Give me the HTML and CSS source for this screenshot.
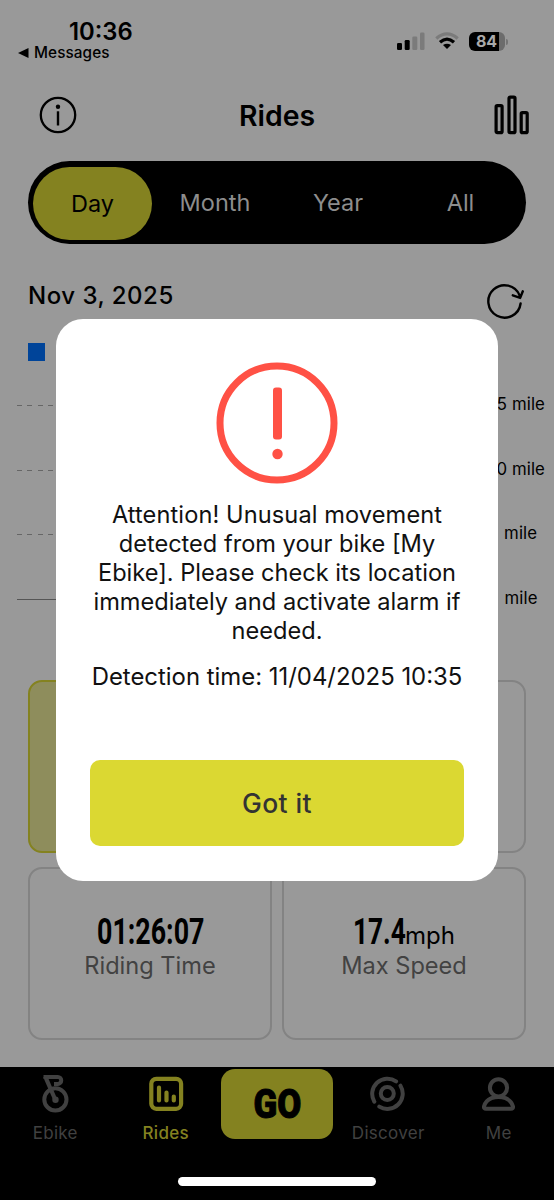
FILE: index.html
```html
<!DOCTYPE html>
<html lang="en">
<head>
<meta charset="utf-8">
<title>Rides</title>
<link rel="stylesheet" href="styles.css">
</head>
<body>
<div class="phone">
  <header class="status">
    <div class="status-left">
      <div class="clock">10:36</div>
      <div class="back"><svg width="11" height="10" viewBox="0 0 11 10"><path d="M0 5 10.500 0V10Z"/></svg><span>Messages</span></div>
    </div>
    <div class="status-right">
      <svg width="28" height="19" viewBox="0 0 28 19">
        <rect x="0" y="11" width="5" height="7" rx="1.300"/><rect x="7.700" y="8" width="5" height="10" rx="1.300"/>
        <rect class="faint" x="15.300" y="4.500" width="5" height="13.500" rx="1.300"/><rect class="faint" x="23" y="0.500" width="4.500" height="17.500" rx="1.300"/>
      </svg>
      <svg class="wifi" width="24" height="18" viewBox="0 0 24 18" fill="none" stroke-width="3.300">
        <path stroke="#7b7b7b" d="M1.300 6.500Q12-2.700 22.700 6.500"/>
        <path stroke="#000" d="M5 10.200Q12 4 19 10.200"/>
        <path fill="#000" d="M8 13Q12 10.600 16 13L12 17Z"/>
      </svg>
      <div class="battery"><span class="battery-body">84</span><span class="battery-tip"></span></div>
    </div>
  </header>

  <nav class="title-bar">
    <svg width="38" height="38" viewBox="0 0 38 38"><circle cx="19" cy="19" r="17.200" fill="none" stroke="#000" stroke-width="2.300"/><circle cx="19" cy="10.700" r="2.200"/><path d="M19 15.300V29.500" stroke="#000" stroke-width="2.400"/></svg>
    <h1>Rides</h1>
    <svg width="36" height="40" viewBox="0 0 36 40" fill="none" stroke="#000" stroke-width="3.200"><rect x="2.100" y="10.600" width="6" height="27" rx="1.200"/><rect x="15" y="2.100" width="6" height="35.500" rx="1.200"/><rect x="27.200" y="17.600" width="6" height="20" rx="1.200"/></svg>
  </nav>

  <div class="segments">
    <span class="segment selected">Day</span><span class="segment">Month</span><span class="segment">Year</span><span class="segment">All</span>
  </div>

  <div class="date-row">
    <span class="date">Nov 3, 2025</span>
    <svg width="38" height="36" viewBox="0 0 38 36" fill="none" stroke="#000" stroke-width="2.400" stroke-linecap="round" stroke-linejoin="round"><path d="M33.600 20.500A16.200 16.200 0 1 1 32.600 12.500M25.800 12.300 33.200 14.900 35.800 8.300"/></svg>
  </div>

  <section class="chart">
    <div class="legend"></div>
    <div class="grid-row"><i></i><span>15 mile</span></div>
    <div class="grid-row"><i></i><span>10 mile</span></div>
    <div class="grid-row"><i></i><span>5 mile</span></div>
    <div class="grid-row solid"><i></i><span>0 mile</span></div>
  </section>

  <section class="cards">
    <div class="card active"></div>
    <div class="card"></div>
    <div class="card"><div class="value"><b class="time">01:26:07</b></div><div class="label">Riding Time</div></div>
    <div class="card"><div class="value"><b class="speed">17.4</b><span>mph</span></div><div class="label">Max Speed</div></div>
  </section>

  <footer class="tabs">
    <div class="tab">
      <svg width="36" height="40" viewBox="0 0 36 40" fill="none" stroke="currentColor" stroke-width="4"><circle cx="18.400" cy="26.400" r="11.100"/><path d="M6.500 4H20.800A3.400 3.400 0 0 1 20.800 10.900H17"/><path d="M8.200 3.500 18 26" stroke-width="4.200"/><circle cx="18.500" cy="26.800" r="3.200" fill="currentColor" stroke="none"/></svg>
      <span>Ebike</span></div>
    <div class="tab on">
      <svg width="36" height="40" viewBox="0 0 36 40" fill="none" stroke="currentColor" stroke-width="4.200"><rect x="3.300" y="5.800" width="29.800" height="30" rx="5"/><path stroke-linecap="round" d="M11 14.500V27.500M18.500 19.500V27.500M25.800 23.500V27.500"/></svg>
      <span>Rides</span></div>
    <div class="go"><span>GO</span></div>
    <div class="tab">
      <svg width="36" height="40" viewBox="0 0 36 40" fill="none" stroke="currentColor" stroke-width="4"><circle cx="17.300" cy="20.500" r="6.500"/><path stroke-linecap="round" d="M26.100 8.300A15.300 15.300 0 0 0 4.300 28.700M30.500 12.700A15.300 15.300 0 0 1 9.300 33.600"/></svg>
      <span>Discover</span></div>
    <div class="tab">
      <svg width="36" height="40" viewBox="0 0 36 40" fill="none" stroke="currentColor" stroke-width="4" stroke-linejoin="round"><circle cx="17.500" cy="14.800" r="8.600"/><path d="M10.500 25.200C7 26.700 4 29.500 3 33.500Q2.700 35.700 5 35.700H30Q32.300 35.700 32 33.500C31 29.500 28 26.700 24.500 25.200Q17.500 22.800 10.500 25.200Z"/></svg>
      <span>Me</span></div>
  </footer>
  <div class="home"></div>

  <div class="dialog" role="alertdialog">
    <svg class="warning" width="122" height="122" viewBox="0 0 122 122"><circle cx="61" cy="61" r="57" fill="none" stroke="#ff5145" stroke-width="7"/><rect x="57" y="25.500" width="9" height="52" rx="3" fill="#ff5145"/><circle cx="61.500" cy="92" r="5.200" fill="#ff5145"/></svg>
    <p class="message"><span class="spaced">Attention! Unusual movement</span><br><span>detected from your bike [My</span><br><span>Ebike]. Please check its location</span><br><span>immediately and activate alarm if</span><br><span>needed.</span></p>
    <p class="when">Detection time: 11/04/2025 10:35</p>
    <button class="confirm">Got it</button>
  </div>
</div>
</body>
</html>
```
FILE: styles.css
```css
* { box-sizing: border-box; }
body { margin: 0; }
svg { display: block; flex: none; }
.phone { position: relative; width: 554px; height: 1200px; overflow: hidden; display: flex; flex-direction: column; background: #999; color: #000; font-family: Inter, "Liberation Sans", sans-serif; white-space: nowrap; }

.status { height: 76px; display: flex; justify-content: space-between; padding: 0 46px 0 18px; }
.clock { margin: 18px 0 0 51px; font-size: 23.800px; line-height: 27px; font-weight: 600; }
.back { display: flex; align-items: center; gap: 5px; font-size: 15.300px; line-height: 16px; font-weight: 500; letter-spacing: .1px; }
.status-right { display: flex; align-items: flex-start; padding-top: 32px; }
.faint { fill: #7b7b7b; }
.wifi { margin: 0 0 0 10px; }
.battery { display: flex; align-items: center; margin-left: 10px; }
.battery-body { width: 36px; height: 19px; border-radius: 6px; padding-right: 1px; background: linear-gradient(90deg, #000 30px, #6c6c6c 30px); color: #aaa; font-size: 16px; line-height: 19px; font-weight: 700; text-align: center; }
.battery-tip { width: 2px; height: 6px; margin-left: 1px; border-radius: 0 2px 2px 0; background: #747474; }

.title-bar { height: 78px; display: grid; grid-template-columns: 60px 1fr 60px; align-items: center; padding: 0 24px; }
.title-bar svg:first-child { margin-left: 15px; }
.title-bar svg:last-child { justify-self: end; }
.title-bar h1 { margin: 1px 0 0; font-size: 28.400px; line-height: 34px; font-weight: 600; text-align: center; }

.segments { width: 498px; height: 83px; margin: 7px 28px 0; padding: 5px 3px 5px 5px; border-radius: 42px; background: #000; display: grid; grid-template-columns: 119px 126px 120px 1fr; align-items: center; font-size: 23.500px; color: #8d8d8d; text-align: center; }
.segment { line-height: 74px; }
.selected { height: 73px; border-radius: 37px; background: #848220; color: #000; }

.date-row { height: 82px; padding: 38px 29px 0 28px; display: flex; justify-content: space-between; align-items: flex-start; }
.date-row svg { margin-top: 1px; }
.date { font-size: 24px; line-height: 28px; font-weight: 500; letter-spacing: .5px; }

.chart { height: 354px; padding: 17px 0 0 17px; }
.legend { width: 17px; height: 18px; margin: 0 0 34px 11px; background: #004499; }
.grid-row { height: 64.700px; display: flex; align-items: flex-start; }
.grid-row i { width: 470px; height: 1px; margin-top: 10px; background: repeating-linear-gradient(90deg, #666 0 5px, transparent 5px 10.500px); }
.grid-row.solid i { background: #555; }
.grid-row span { width: 58px; font-size: 16.800px; line-height: 19px; letter-spacing: .1px; text-align: right; }
.grid-row:nth-child(4) span, .grid-row:nth-child(5) span { width: 49px; word-spacing: 2px; }

.cards { height: 387px; padding: 0 28px; display: grid; grid-template-columns: 244px 244px; grid-template-rows: 173px 173px; gap: 14px 10px; }
.card { border: 2px solid #838383; border-radius: 14px; text-align: center; }
.card.active { border-color: #848220; background: #8e8d5c; }
.value { height: 40px; margin-top: 43px; display: flex; justify-content: center; align-items: baseline; line-height: 38px; font-size: 24px; }
.value b { font: 700 37.500px/38px Roboto, sans-serif; transform-origin: 0 50%; }
.time { width: 107px; transform: scaleX(.715); }
.speed { width: 52px; transform: scaleX(.7); }
.label { font-size: 23.600px; line-height: 28px; color: #424242; }

.tabs { height: 133px; display: grid; grid-template-columns: repeat(5, 1fr); justify-items: center; align-items: start; background: #000; }
.tab { padding-top: 6px; display: flex; flex-direction: column; align-items: center; color: #414141; font-size: 17px; line-height: 22px; letter-spacing: .3px; }
.tab span { margin-top: 9px; }
.tab.on { color: #848220; font-weight: 500; }
.go { width: 112px; height: 70px; margin-top: 2px; border-radius: 14px; background: #848220; display: flex; justify-content: center; align-items: center; }
.go span { margin-top: 2px; font: 900 40px/40px Roboto, sans-serif; transform: scaleX(.87); -webkit-text-stroke: 1px #000; }
.home { position: absolute; left: 178px; top: 1177px; width: 198px; height: 9px; border-radius: 5px; background: #fff; }

.dialog { position: absolute; left: 56px; top: 319px; width: 442px; height: 562px; border-radius: 27px; background: #fff; display: flex; flex-direction: column; align-items: center; padding-top: 43px; color: #111; }
.message { margin: 17px 0 0; font-size: 23.600px; line-height: 28.900px; text-align: center; }
.spaced { letter-spacing: .1px; }
.when { margin: 16px 0 0; font-size: 23.900px; line-height: 29px; }
.confirm { width: 374px; height: 86px; margin-top: 69px; padding: 0; border: 0; border-radius: 10px; background: #dbd832; color: #333; font: 500 26.500px/32px Inter, sans-serif; letter-spacing: .4px; }
```
